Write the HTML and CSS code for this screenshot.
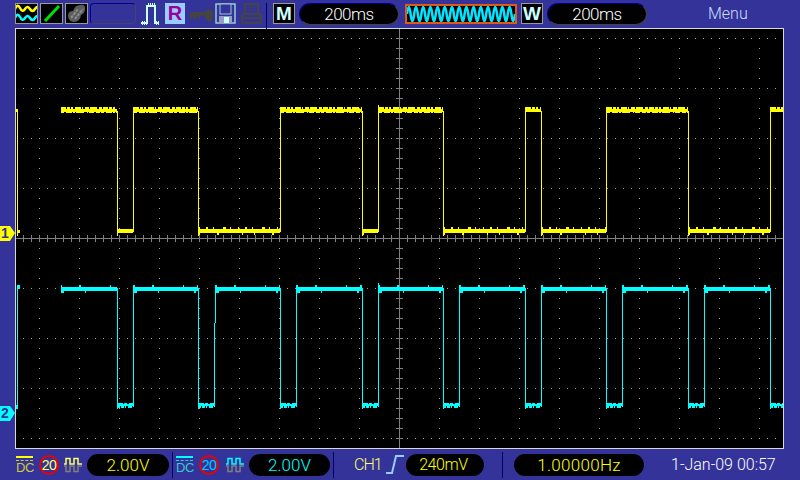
FILE: index.html
```html
<!DOCTYPE html>
<html lang="en">

<head>
    <meta charset="UTF-8">
    <meta name="viewport" content="width=device-width, initial-scale=1.0">
    <title>Oscilloscope</title>
    <link rel="stylesheet" href="styles.css">
</head>

<body>

    <div class="top-bar">
        <div class="tool-group">
            <div class="icon-btn">
                <svg width="21" height="19" viewBox="0 0 21 19" fill="none" stroke-width="2.5">
                    <path d="M-1 5 Q1.5 -1 4 4 T9 5 T14 5 T19 5 T24 5" stroke="#ffff00"/>
                    <path d="M-1 14 Q1.5 8 4 13 T9 14 T14 14 T19 14 T24 14" stroke="#00ffff"/>
                </svg>
            </div>
            <div class="icon-btn">
                <svg width="21" height="19" viewBox="0 0 21 19" fill="none"><path d="M4 17 L18 2" stroke="#00e000" stroke-width="3"/></svg>
            </div>
            <div class="icon-btn">
                <svg width="21" height="19" viewBox="0 0 21 19">
                    <path d="M2 12 Q2 7 7 7 Q9 1 14 1 Q20 0 19 6 Q18 10 15 11 Q14 18 8 18 Q3 18 2 12Z" fill="#5c5c5c"/>
                    <path d="M5 14 L12 5 M9 15 L17 5" stroke="#8c8c8c" stroke-width="2" stroke-dasharray="3 1"/>
                </svg>
            </div>
            <div class="blank-box"></div>
            <svg class="pulse-icon" width="18" height="22" viewBox="0 0 18 22" fill="none" stroke="#ccffff" stroke-width="2" shape-rendering="crispEdges">
                <path d="M0 20 H6 V3 H14 V20 H18"/>
                <path d="M7 0 V3 M9 0 V3 M11 0 V3 M13 0 V3 M1 18 V22 M3 18 V22 M5 18 V22 M15 18 V22 M17 18 V22" stroke-width="1"/>
            </svg>
            <div class="r-btn">R</div>
            <svg class="key-icon" width="23" height="13" viewBox="0 0 23 13" fill="#444444">
                <path d="M0 3 H15 V7 H10 V10 H8 V8 H6 V11 H4 V8 H2 V10 H0Z"/>
                <path d="M15 2 Q17 0 20 0 Q23 1 23 6 Q23 12 20 13 Q17 13 15 9Z"/>
            </svg>
            <svg class="disk-icon" width="21" height="21" viewBox="0 0 21 21">
                <path d="M1 1 H20 V20 H1Z" fill="#333399" stroke="#99cccc" stroke-width="1.5"/>
                <rect x="5" y="1" width="11" height="10" fill="#333399" stroke="#99cccc"/>
                <rect x="4" y="13" width="13" height="7" fill="#9999cc"/>
                <rect x="9" y="14" width="5" height="6" fill="#ccffff"/>
            </svg>
            <svg class="print-icon" width="21" height="21" viewBox="0 0 21 21" fill="none" stroke="#444444" stroke-width="2">
                <rect x="4" y="1" width="13" height="10"/>
                <path d="M7 4 H14 M7 7 H14" stroke-width="1"/>
                <rect x="1" y="11" width="19" height="9" rx="2"/>
                <path d="M1 15 H20"/>
            </svg>
        </div>
        <div class="divider top-divider"></div>
        <div class="letter-btn">M</div>
        <div class="pill time-pill">200ms</div>
        <div class="overview">
            <svg width="108" height="16" viewBox="0 0 108 16" fill="none">
                <path d="M0 8 Q1.8 -6 3.6 8 T7.2 8 T10.8 8 T14.4 8 T18 8 T21.6 8 T25.2 8 T28.8 8 T32.4 8 T36 8 T39.6 8 T43.2 8 T46.8 8 T50.4 8 T54 8 T57.6 8 T61.2 8 T64.8 8 T68.4 8 T72 8 T75.6 8 T79.2 8 T82.8 8 T86.4 8 T90 8 T93.6 8 T97.2 8 T100.8 8 T104.4 8 T108 8" stroke="#00e5ff" stroke-width="2.5"/>
            </svg>
        </div>
        <div class="letter-btn">W</div>
        <div class="pill time-pill">200ms</div>
        <div class="menu-label">Menu</div>
    </div>

    <div class="plot">
        <svg class="plot-svg" width="767" height="419" viewBox="16 29 767 419" shape-rendering="crispEdges">
            <defs>
                <pattern id="row-dots" x="23" y="38" width="8" height="50" patternUnits="userSpaceOnUse">
                    <rect width="1" height="1" fill="#a0a0a0"/>
                </pattern>
                <pattern id="col-dots" x="39" y="8" width="40" height="10" patternUnits="userSpaceOnUse">
                    <rect width="1" height="1" fill="#a0a0a0"/>
                </pattern>
                <pattern id="h-ticks" x="7" y="235" width="8" height="7" patternUnits="userSpaceOnUse">
                    <rect width="1" height="7" fill="#808080"/>
                </pattern>
                <pattern id="v-ticks" x="396" y="8" width="7" height="10" patternUnits="userSpaceOnUse">
                    <rect width="7" height="1" fill="#808080"/>
                </pattern>
            </defs>

            <!-- graticule -->
            <rect x="16" y="29" width="767" height="419" fill="url(#row-dots)"/>
            <rect x="16" y="29" width="767" height="419" fill="url(#col-dots)"/>
            <rect x="16" y="235" width="767" height="7" fill="url(#h-ticks)"/>
            <rect x="396" y="29" width="7" height="419" fill="url(#v-ticks)"/>
            <rect x="16" y="238" width="767" height="1" fill="#808080"/>
            <rect x="399" y="29" width="1" height="419" fill="#808080"/>

            <!-- channel 1 -->
            <g fill="none" stroke="#ffff00">
                <path d="M17.5 111 V236"/>
                <path stroke-width="3" d="M16 110.5 H18 M18 231 H20"/>
                <path d="M117.5 111 V236 M133.5 107 V232 M198.5 111 V236 M280.5 107 V232 M362.5 111 V236 M378.5 105 V232 M443.5 111 V236 M525.5 107 V232 M541.5 111 V236 M606.5 107 V232 M688.5 111 V236 M770.5 107 V232"/>
                <path stroke-width="3" d="M61 110.5 H117 M134 110.5 H198 M281 110.5 H362 M379 110.5 H443 M526 110.5 H541 M607 110.5 H688 M771 110.5 H783"/>
                <path stroke-width="2" stroke-dasharray="5 1 3 1 2 2 6 1 1 2 4 1 7 2 3 1" d="M61 108 H117 M134 108 H198 M281 108 H362 M379 108 H443 M526 108 H541 M607 108 H688 M771 108 H783"/>
                <path stroke-width="1" stroke-dasharray="3 2 6 1 2 1 8 3 1 1 5 2 4 1" d="M61 112.5 H117 M134 112.5 H198 M281 112.5 H362 M379 112.5 H443 M607 112.5 H688"/>
                <path stroke-width="4" d="M118 231 H133 M199 231 H280 M363 231 H378 M444 231 H525 M542 231 H606 M689 231 H770"/>
                <path stroke-width="2" stroke-dasharray="1 6 2 5 1 9 3 4 1 7" d="M199 228 H280 M444 228 H525 M542 228 H606 M689 228 H770"/>
                <path stroke-width="2" stroke-dasharray="1 17 2 23 1 11" d="M199 234 H280 M363 234 H378 M444 234 H525 M542 234 H606 M689 234 H770"/>
            </g>

            <!-- channel 2 -->
            <g fill="none" stroke="#00ffff">
                <path d="M17.5 288 V408"/>
                <path stroke-width="4" d="M17 287 H20 M16 406.5 H18"/>
                <path d="M117.5 288 V409 M133.5 285 V407 M198.5 288 V409 M215.5 285 V323 M214.5 323 V407 M280.5 288 V409 M296.5 285 V407 M362.5 288 V409 M378.5 283 V407 M443.5 288 V409 M459.5 285 V407 M525.5 288 V409 M541.5 285 V407 M606.5 288 V409 M622.5 285 V407 M688.5 288 V409 M704.5 285 V407 M770.5 288 V409"/>
                <path stroke-width="4" d="M61 289 H117 M134 289 H198 M216 289 H280 M297 289 H362 M379 289 H443 M460 289 H525 M542 289 H606 M623 289 H688 M705 289 H770"/>
                <path stroke-width="2" stroke-dasharray="1 17 2 29 1 13 3 41" d="M61 286 H117 M134 286 H198 M216 286 H280 M297 286 H362 M379 286 H443 M460 286 H525 M542 286 H606 M623 286 H688 M705 286 H770"/>
                <path stroke-width="2" stroke-dasharray="3 21 1 35 2 27" d="M61 292 H117 M134 292 H198 M216 292 H280 M297 292 H362 M379 292 H443 M460 292 H525 M542 292 H606 M623 292 H688 M705 292 H770"/>
                <path stroke-width="2" d="M118 405 H133 M199 405 H214 M281 405 H296 M363 405 H378 M444 405 H459 M526 405 H541 M607 405 H622 M689 405 H704 M771 405 H783"/>
                <path stroke-width="1" stroke-dasharray="5 1 3 2 6 1" d="M118 403.5 H133 M199 403.5 H214 M281 403.5 H296 M363 403.5 H378 M444 403.5 H459 M526 403.5 H541 M607 403.5 H622 M689 403.5 H704 M771 403.5 H783"/>
                <path stroke-width="2" stroke-dasharray="2 1 3 1 1 2 4 1" d="M118 407 H133 M199 407 H214 M281 407 H296 M363 407 H378 M444 407 H459 M526 407 H541 M607 407 H622 M689 407 H704 M771 407 H783"/>
            </g>
        </svg>
    </div>

    <div class="marker marker-ch1">1</div>
    <div class="marker marker-ch2">2</div>

    <div class="bottom-bar">
        <div class="dc-label dc-ch1">DC</div>
        <div class="limit limit-ch1">20</div>
        <svg class="invert-icon" width="18" height="16" viewBox="0 0 18 16" fill="none" stroke-width="1.5">
            <path d="M0 7 H2 V1.5 H6 V7 H10 V1.5 H14 V7 H18" stroke="#ffff66"/>
            <path d="M0 9 H2 V14.5 H6 V9 H10 V14.5 H14 V9 H18" stroke="#808080"/>
        </svg>
        <div class="pill ch1-text volt-pill">2.00V</div>
        <div class="divider"></div>
        <div class="dc-label dc-ch2">DC</div>
        <div class="limit limit-ch2">20</div>
        <svg class="invert-icon" width="18" height="16" viewBox="0 0 18 16" fill="none" stroke-width="1.5">
            <path d="M0 7 H2 V1.5 H6 V7 H10 V1.5 H14 V7 H18" stroke="#00ffff"/>
            <path d="M0 9 H2 V14.5 H6 V9 H10 V14.5 H14 V9 H18" stroke="#808080"/>
        </svg>
        <div class="pill ch2-text volt-pill volt-pill-ch2">2.00V</div>
        <div class="divider"></div>
        <div class="trig-source">CH1</div>
        <svg class="trig-icon" width="18" height="19" viewBox="0 0 18 19" fill="none" stroke="#99ccff" stroke-width="2">
            <path d="M0 18 H6 L10 1 H18"/>
        </svg>
        <div class="pill ch1-text trig-pill">240mV</div>
        <div class="divider freq-divider"></div>
        <div class="pill ch1-text freq-pill">1.00000Hz</div>
        <div class="clock">1-Jan-09 00:57</div>
    </div>

</body>

</html>
```

FILE: styles.css
```css
body {
    font-family: Roboto, "Liberation Sans", Arial, sans-serif;
    font-weight: 300;
    background-color: #333399;
    margin: 0;
    padding: 0;
    width: 800px;
    height: 480px;
    overflow: hidden;
    position: relative;
}

.top-bar {
    height: 28px;
    display: flex;
    align-items: flex-start;
    padding: 3px 0 0 15px;
    box-sizing: border-box;
}

.tool-group {
    display: flex;
    align-items: flex-start;
    width: 251px;
}

.icon-btn {
    width: 23px;
    height: 21px;
    box-sizing: border-box;
    border: 1px solid #999999;
    background-color: #000;
    margin-right: 2px;
    display: flex;
    align-items: center;
    justify-content: center;
    overflow: hidden;
}

.blank-box {
    width: 46px;
    height: 21px;
    box-sizing: border-box;
    border: 1px solid #444466;
    border-top-color: #000099;
    border-left-color: #000099;
    border-radius: 4px;
    margin-right: 5px;
}

.pulse-icon {
    margin-right: 6px;
}

.r-btn {
    width: 20px;
    height: 21px;
    background-color: #99ccff;
    color: #990099;
    font-family: "Liberation Sans", Arial, sans-serif;
    font-size: 20px;
    font-weight: bold;
    line-height: 21px;
    text-align: center;
    margin-right: 5px;
}

.key-icon {
    margin: 6px 2px 0 0;
}

.disk-icon {
    margin-right: 5px;
}

.divider {
    width: 1px;
    height: 26px;
    background-color: #000066;
}

.top-divider {
    margin-right: 6px;
}

.letter-btn {
    width: 22px;
    height: 21px;
    box-sizing: border-box;
    border: 1px solid #999999;
    background-color: #000;
    color: #ccffff;
    font-family: "Liberation Sans", Arial, sans-serif;
    font-size: 19px;
    font-weight: bold;
    line-height: 19px;
    text-align: center;
}

.pill {
    background-color: #000;
    border-radius: 11px;
    height: 22px;
    line-height: 22px;
    font-size: 17px;
    text-align: center;
    box-sizing: border-box;
}

.time-pill {
    width: 100px;
    margin-left: 4px;
    color: #fff;
    letter-spacing: -0.5px;
    border: 1px solid #000099;
    border-right-color: #444444;
    border-bottom-color: #444444;
    line-height: 20px;
}

.overview {
    width: 112px;
    height: 20px;
    box-sizing: border-box;
    border: 2px solid #e05a14;
    background-color: #000;
    margin: 1px 4px 0 6px;
    display: flex;
    align-items: center;
    justify-content: center;
    overflow: hidden;
}

.menu-label {
    margin-left: 61px;
    color: #ccddff;
    font-size: 16px;
    line-height: 22px;
}

.plot {
    margin-left: 15px;
    width: 769px;
    height: 421px;
    box-sizing: border-box;
    border: 1px solid #d8d8d8;
    background-color: #000;
}

.plot-svg {
    display: block;
}

.marker {
    position: absolute;
    left: 0;
    width: 15px;
    height: 15px;
    color: #333399;
    font-family: "Liberation Sans", Arial, sans-serif;
    font-size: 14px;
    font-weight: bold;
    line-height: 15px;
    padding-left: 1px;
    box-sizing: border-box;
    clip-path: polygon(0 0, 10px 0, 15px 7px, 10px 15px, 0 15px);
}

.marker-ch1 {
    top: 226px;
    background-color: #ffff00;
}

.marker-ch2 {
    top: 406px;
    background-color: #00ffff;
}

.bottom-bar {
    height: 31px;
    display: flex;
    align-items: center;
    padding: 3px 0 3px 16px;
    box-sizing: border-box;
}

.dc-label {
    width: 17px;
    font-family: "Liberation Sans", Arial, sans-serif;
    font-size: 13px;
    line-height: 12px;
    border-top: 2px solid;
    text-align: center;
    letter-spacing: -0.5px;
    margin: 1px 6px 0 0;
}

.dc-label::before {
    content: "";
    display: block;
    margin: 2px 0 1px;
    border-top: 1px dashed;
}

.dc-ch1 {
    color: #cccc33;
    border-top-color: #ffff00;
}

.dc-ch2 {
    color: #33cccc;
    margin-left: 3px;
    border-top-color: #00ffff;
}

.limit {
    width: 20px;
    height: 20px;
    border-radius: 50%;
    box-sizing: border-box;
    border: 2px solid #ee0000;
    font-family: "Liberation Sans", Arial, sans-serif;
    font-size: 14px;
    line-height: 16px;
    text-align: center;
    letter-spacing: -0.5px;
    margin-right: 5px;
}

.limit-ch1 {
    color: #ffff66;
}

.limit-ch2 {
    color: #00ccff;
    margin-right: 7px;
}

.invert-icon {
    margin-right: 5px;
}

.ch1-text {
    color: #ffff00;
}

.ch2-text {
    color: #00ffff;
}

.volt-pill {
    width: 82px;
    margin-right: 3px;
}

.volt-pill-ch2 {
    width: 81px;
}

.trig-source {
    margin-left: 20px;
    width: 32px;
    color: #ffff66;
    font-size: 16px;
    letter-spacing: -1px;
}

.trig-icon {
    margin-right: 2px;
}

.trig-pill {
    width: 78px;
    padding-right: 3px;
    font-size: 16px;
    letter-spacing: -0.4px;
}

.freq-divider {
    margin-left: 18px;
}

.freq-pill {
    width: 130px;
    margin-left: 11px;
    letter-spacing: 0.3px;
}

.clock {
    margin-left: 27px;
    color: #fff;
    font-size: 16px;
    white-space: nowrap;
}
```
